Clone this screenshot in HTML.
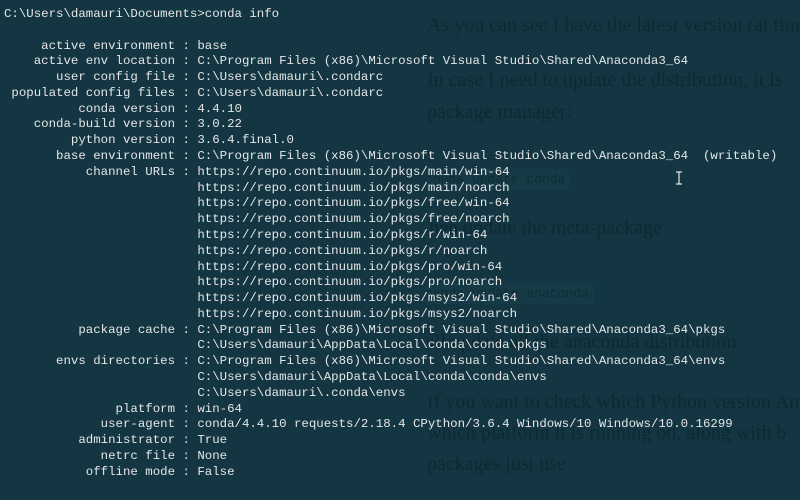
<!DOCTYPE html>
<html><head><meta charset="utf-8"><style>
html,body{margin:0;padding:0;width:800px;height:500px;overflow:hidden;background:#133642;}
.bg{position:absolute;left:427px;top:0;width:373px;height:500px;overflow:hidden;font-family:"Liberation Serif",serif;font-size:20px;color:#0c2a33;white-space:nowrap;}
.bg div{position:absolute;left:0;}
.code{font-family:"Liberation Mono",monospace;font-size:13px;background:#163a46;color:#0f2d37;padding:3px 4px;}
pre{position:absolute;left:4px;top:7px;margin:0;font-family:"Liberation Mono",monospace;font-size:12.4px;line-height:15.78px;color:#e6e6e6;}
.cur{position:absolute;left:675px;top:171px;width:8px;height:14px;}
</style></head><body>
<div class="bg">
<div style="top:14px">As you can see I have the latest version (at time of writing)</div>
<div style="top:69px">In case I need to update the distribution, it is</div>
<div style="top:101px">package manager:</div>
<div style="top:166px;left:-6px"><span class="code">conda update conda</span></div>
<div style="top:217px;left:-10px">Then update the meta-package</div>
<div style="top:280px;left:-6px"><span class="code">conda update anaconda</span></div>
<div style="top:331px;left:-46px">this will update all the anaconda distribution</div>
<div style="top:391px">If you want to check which Python version Anaconda</div>
<div style="top:422px">which platform it is running on, along with b</div>
<div style="top:453px">packages just use</div>
</div>
<pre>C:\Users\damauri\Documents&gt;conda info

     active environment : base
    active env location : C:\Program Files (x86)\Microsoft Visual Studio\Shared\Anaconda3_64
       user config file : C:\Users\damauri\.condarc
 populated config files : C:\Users\damauri\.condarc
          conda version : 4.4.10
    conda-build version : 3.0.22
         python version : 3.6.4.final.0
       base environment : C:\Program Files (x86)\Microsoft Visual Studio\Shared\Anaconda3_64  (writable)
           channel URLs : https://repo.continuum.io/pkgs/main/win-64
                          https://repo.continuum.io/pkgs/main/noarch
                          https://repo.continuum.io/pkgs/free/win-64
                          https://repo.continuum.io/pkgs/free/noarch
                          https://repo.continuum.io/pkgs/r/win-64
                          https://repo.continuum.io/pkgs/r/noarch
                          https://repo.continuum.io/pkgs/pro/win-64
                          https://repo.continuum.io/pkgs/pro/noarch
                          https://repo.continuum.io/pkgs/msys2/win-64
                          https://repo.continuum.io/pkgs/msys2/noarch
          package cache : C:\Program Files (x86)\Microsoft Visual Studio\Shared\Anaconda3_64\pkgs
                          C:\Users\damauri\AppData\Local\conda\conda\pkgs
       envs directories : C:\Program Files (x86)\Microsoft Visual Studio\Shared\Anaconda3_64\envs
                          C:\Users\damauri\AppData\Local\conda\conda\envs
                          C:\Users\damauri\.conda\envs
               platform : win-64
             user-agent : conda/4.4.10 requests/2.18.4 CPython/3.6.4 Windows/10 Windows/10.0.16299
          administrator : True
             netrc file : None
           offline mode : False</pre>
<svg class="cur" viewBox="0 0 8 14"><path d="M1 1h6M4 1v12M1 13h6" stroke="#e6e6e6" stroke-width="1.2" fill="none"/></svg>
</body></html>
